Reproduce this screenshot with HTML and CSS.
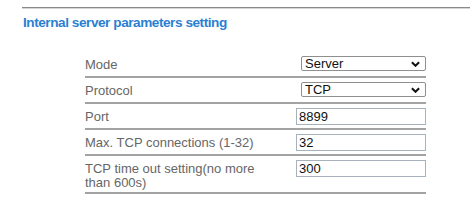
FILE: index.html
```html
<!DOCTYPE html>
<html>
<head>
<meta charset="utf-8">
<link rel="stylesheet" href="styles.css">
</head>
<body>
<div class="page">
  <div class="rule"></div>
  <h2 class="title">Internal server parameters setting</h2>
  <div class="form">
    <div class="row">
      <div class="label">Mode</div>
      <div class="value">
        <div class="select"><span>Server</span>
          <svg class="chev" viewBox="0 0 10 6" width="9" height="6"><path d="M1 1 L5 5 L9 1" fill="none" stroke="#111" stroke-width="2.2"/></svg>
        </div>
      </div>
    </div>
    <div class="row">
      <div class="label">Protocol</div>
      <div class="value">
        <div class="select"><span>TCP</span>
          <svg class="chev" viewBox="0 0 10 6" width="9" height="6"><path d="M1 1 L5 5 L9 1" fill="none" stroke="#111" stroke-width="2.2"/></svg>
        </div>
      </div>
    </div>
    <div class="row">
      <div class="label">Port</div>
      <div class="value"><input class="field" type="text" value="8899"></div>
    </div>
    <div class="row">
      <div class="label">Max. TCP connections (1-32)</div>
      <div class="value"><input class="field" type="text" value="32"></div>
    </div>
    <div class="row tall">
      <div class="label">TCP time out setting(no more than 600s)</div>
      <div class="value"><input class="field" type="text" value="300"></div>
    </div>
  </div>
</div>
</body>
</html>
```
FILE: styles.css
```css
html, body {
  margin: 0;
  padding: 0;
  background: #fff;
}
.page {
  padding-top: 7px;
  font-family: "Liberation Sans", Arial, sans-serif;
}
.rule {
  margin-left: 22px;
  width: 448px;
  height: 1px;
  background: #8a8a8a;
  border-bottom: 1px solid #d6d6d6;
}
.title {
  margin: 5px 0 0 23px;
  font-size: 13.6px;
  line-height: 17px;
  letter-spacing: -0.45px;
  font-weight: bold;
  color: #2a7fd2;
}
.form {
  margin: 21px 0 0 85px;
  width: 341px;
}
.row {
  display: flex;
  align-items: flex-start;
  border-bottom: 2px solid #a3a3a3;
  height: 24px;
  box-sizing: content-box;
}
.row.tall {
  height: 36px;
}
.label {
  width: 185px;
  padding-top: 6px;
  font-size: 13px;
  line-height: 14px;
  color: #666;
}
.value {
  flex: 1;
  display: flex;
  justify-content: flex-end;
  padding-top: 4px;
}
.select {
  width: 125px;
  height: 15px;
  box-sizing: border-box;
  border: 1px solid #8f8f8f;
  border-radius: 2px;
  display: flex;
  align-items: center;
  justify-content: space-between;
  padding: 0 5px 0 3px;
  font-size: 13px;
  color: #111;
}
.chev {
  display: block;
}
.field {
  width: 130px;
  height: 17px;
  box-sizing: border-box;
  margin: 0;
  border: 1px solid #a7b2bd;
  padding: 0 2px;
  font-family: "Liberation Sans", Arial, sans-serif;
  font-size: 13px;
  color: #111;
  outline: none;
}
```
